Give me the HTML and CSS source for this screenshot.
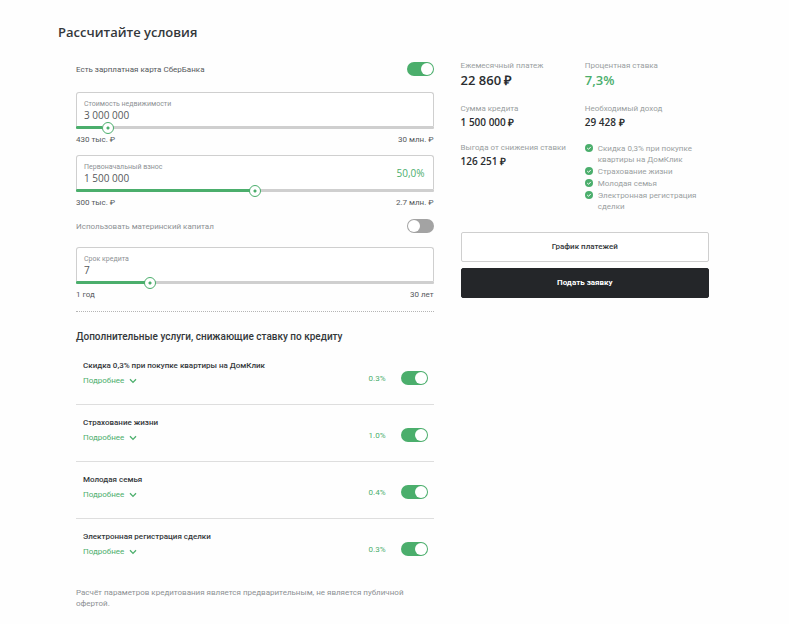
FILE: index.html
```html
<!DOCTYPE html>
<html lang="ru">
<head>
    <meta charset="UTF-8">
    <meta name="viewport" content="width=device-width, initial-scale=1">
    <title>Рассчитайте условия</title>
    <link rel="stylesheet" href="styles.css">
</head>
<body>

<div class="container">
    <h1>Рассчитайте условия</h1>

    <div class="columns">
        <form class="calc">
            <div class="option">
                <label for="salaryCard">Есть зарплатная карта СберБанка</label>
                <input class="switch" type="checkbox" id="salaryCard" checked>
            </div>

            <div class="field">
                <div class="field-box">
                    <div class="field-main">
                        <label for="price">Стоимость недвижимости</label>
                        <input type="text" id="price" value="3 000 000">
                    </div>
                </div>
                <input class="slider" type="range" aria-label="Стоимость недвижимости" min="0" max="100" step="0.1" value="7.4" style="--fill: 7.4%">
                <div class="limits"><span>430 тыс. ₽</span><span>30 млн. ₽</span></div>
            </div>

            <div class="field">
                <div class="field-box">
                    <div class="field-main">
                        <label for="deposit">Первоначальный взнос</label>
                        <input type="text" id="deposit" value="1 500 000">
                    </div>
                    <span class="share">50,0%</span>
                </div>
                <input class="slider" type="range" aria-label="Первоначальный взнос" min="0" max="100" step="0.1" value="50" style="--fill: 50%">
                <div class="limits"><span>300 тыс. ₽</span><span>2.7 млн. ₽</span></div>
            </div>

            <div class="option muted">
                <label for="capital">Использовать материнский капитал</label>
                <input class="switch" type="checkbox" id="capital">
            </div>

            <div class="field">
                <div class="field-box">
                    <div class="field-main">
                        <label for="term">Срок кредита</label>
                        <input type="text" id="term" value="7">
                    </div>
                </div>
                <input class="slider" type="range" aria-label="Срок кредита" min="0" max="100" step="0.1" value="19.7" style="--fill: 19.7%">
                <div class="limits"><span>1 год</span><span>30 лет</span></div>
            </div>

            <h2>Дополнительные услуги, снижающие ставку по кредиту</h2>

            <ul class="services">
                <li>
                    <div>
                        <label for="domclick">Скидка 0,3% при покупке квартиры на ДомКлик</label>
                        <button type="button" class="more">Подробнее <svg viewBox="0 0 8 6"><path d="M1 1.2l3 3.2 3-3.2"/></svg></button>
                    </div>
                    <div class="service-side">
                        <span>0.3%</span>
                        <input class="switch" type="checkbox" id="domclick" checked>
                    </div>
                </li>
                <li>
                    <div>
                        <label for="life">Страхование жизни</label>
                        <button type="button" class="more">Подробнее <svg viewBox="0 0 8 6"><path d="M1 1.2l3 3.2 3-3.2"/></svg></button>
                    </div>
                    <div class="service-side">
                        <span>1.0%</span>
                        <input class="switch" type="checkbox" id="life" checked>
                    </div>
                </li>
                <li>
                    <div>
                        <label for="family">Молодая семья</label>
                        <button type="button" class="more">Подробнее <svg viewBox="0 0 8 6"><path d="M1 1.2l3 3.2 3-3.2"/></svg></button>
                    </div>
                    <div class="service-side">
                        <span>0.4%</span>
                        <input class="switch" type="checkbox" id="family" checked>
                    </div>
                </li>
                <li>
                    <div>
                        <label for="registration">Электронная регистрация сделки</label>
                        <button type="button" class="more">Подробнее <svg viewBox="0 0 8 6"><path d="M1 1.2l3 3.2 3-3.2"/></svg></button>
                    </div>
                    <div class="service-side">
                        <span>0.3%</span>
                        <input class="switch" type="checkbox" id="registration" checked>
                    </div>
                </li>
            </ul>

            <p class="note">Расчёт параметров кредитования является предварительным, не является публичной офертой.</p>
        </form>

        <div class="summary">
            <div class="totals">
                <dl>
                    <dt>Ежемесячный платеж</dt>
                    <dd class="big">22 860 ₽</dd>
                    <dt>Сумма кредита</dt>
                    <dd>1 500 000 ₽</dd>
                    <dt>Выгода от снижения ставки</dt>
                    <dd>126 251 ₽</dd>
                </dl>
                <div>
                    <dl>
                        <dt>Процентная ставка</dt>
                        <dd class="big green">7,3%</dd>
                        <dt>Необходимый доход</dt>
                        <dd>29 428 ₽</dd>
                    </dl>
                    <ul class="benefits">
                        <li><svg viewBox="0 0 8 8"><circle cx="4" cy="4" r="4"/><path d="M2.2 4l1.3 1.3 2.3-2.4"/></svg>Скидка 0,3% при покупке квартиры на ДомКлик</li>
                        <li><svg viewBox="0 0 8 8"><circle cx="4" cy="4" r="4"/><path d="M2.2 4l1.3 1.3 2.3-2.4"/></svg>Страхование жизни</li>
                        <li><svg viewBox="0 0 8 8"><circle cx="4" cy="4" r="4"/><path d="M2.2 4l1.3 1.3 2.3-2.4"/></svg>Молодая семья</li>
                        <li><svg viewBox="0 0 8 8"><circle cx="4" cy="4" r="4"/><path d="M2.2 4l1.3 1.3 2.3-2.4"/></svg>Электронная регистрация сделки</li>
                    </ul>
                </div>
            </div>
            <button type="button" class="btn">График платежей</button>
            <button type="button" class="btn btn-dark">Подать заявку</button>
        </div>
    </div>
</div>

</body>
</html>
```
FILE: styles.css
```css
* {
    box-sizing: border-box;
}

body {
    font-family: Roboto, 'Open Sans', sans-serif;
    font-size: 8px;
    line-height: 11px;
    color: #55595c;
    background: #fefefe;
    margin: 0;
}

h1, h2, p, ul, dl, dd {
    margin: 0;
    padding: 0;
}

ul {
    list-style: none;
}

input, button {
    font-family: inherit;
    margin: 0;
}

.container {
    padding: 23px 80px 15px 58px;
}

h1 {
    font-family: 'Open Sans', sans-serif;
    font-size: 13px;
    line-height: 18px;
    font-weight: 600;
    color: #34383b;
    margin-bottom: 19px;
}

.columns {
    display: grid;
    grid-template-columns: 357fr 248fr;
    gap: 27px;
    align-items: start;
    padding-left: 18px;
}

.calc {
    padding-top: 2px;
}

.option {
    display: flex;
    justify-content: space-between;
    align-items: center;
}

.muted {
    color: #8d9194;
    margin-top: 11px;
}

/* toggle */
.switch {
    appearance: none;
    display: block;
    flex: none;
    width: 27px;
    height: 14px;
    border-radius: 7px;
    background: #a3a3a3;
    cursor: pointer;
}

.switch::before {
    content: "";
    display: block;
    width: 12px;
    height: 12px;
    margin: 1px;
    border-radius: 50%;
    background: #fff;
}

.switch:checked {
    background: #4bae6c;
}

.switch:checked::before {
    margin-left: 14px;
}

/* field with slider */
.option + .field {
    margin-top: 16px;
}

.muted + .field {
    margin-top: 14px;
}

.field + .field {
    margin-top: 10px;
}

.field-box {
    display: flex;
    align-items: center;
    padding: 6px 8px 5px 7px;
    border: 1px solid #cfcfcf;
    border-bottom: none;
    border-radius: 3px 3px 0 0;
    background: #fff;
}

.field-main {
    flex: 1;
}

.field-main label {
    display: block;
    font-size: 7px;
    line-height: 10px;
    color: #8d9194;
}

.field-main input {
    display: block;
    width: 100%;
    height: 12px;
    padding: 0;
    border: none;
    background: none;
    font-family: 'Open Sans', sans-serif;
    font-size: 10px;
    line-height: 12px;
    color: #55595c;
}

.share {
    font-family: 'Open Sans', sans-serif;
    font-size: 10px;
    color: #4bae6c;
}

.slider {
    appearance: none;
    display: block;
    width: 100%;
    height: 12px;
    margin-top: -5px;
    margin-bottom: 1px;
    background: none;
    cursor: pointer;
}

.slider::-webkit-slider-runnable-track {
    height: 3px;
    border-radius: 1px;
    background: linear-gradient(to right, #4bae6c var(--fill), #cfcfcf var(--fill));
}

.slider::-webkit-slider-thumb {
    appearance: none;
    width: 12px;
    height: 12px;
    margin-top: -4px;
    border: 1px solid #4bae6c;
    border-radius: 50%;
    background: radial-gradient(circle, #4bae6c 1px, #fff 2px);
}

.limits {
    display: flex;
    justify-content: space-between;
    line-height: 11px;
}

h2 {
    font-size: 10px;
    line-height: 17px;
    font-weight: 500;
    color: #34383b;
    margin-top: 11px;
    padding-top: 16px;
    border-top: 1px dotted #b5b5b5;
}

.services {
    margin-top: 3px;
}

.services li {
    display: flex;
    justify-content: space-between;
    align-items: flex-start;
    padding: 12px 6px 18px 7px;
    border-bottom: 1px solid #dedede;
}

.services li:last-child {
    border-bottom: none;
}

.services label {
    display: block;
    font-weight: 500;
    color: #34383b;
}

.more {
    display: flex;
    align-items: center;
    gap: 5px;
    margin-top: 4px;
    padding: 0;
    border: none;
    background: none;
    font-size: 8px;
    line-height: 11px;
    color: #4bae6c;
    cursor: pointer;
}

.more svg {
    width: 8px;
    height: 6px;
    fill: none;
    stroke: #4bae6c;
    stroke-width: 1.3;
}

.service-side {
    display: flex;
    align-items: center;
    gap: 15px;
    margin-top: 11px;
    color: #4bae6c;
}

.note {
    margin-top: 12px;
    padding-right: 24px;
    color: #8d9194;
}

/* right column */
.summary {
    padding-top: 1px;
}

.totals {
    display: grid;
    grid-template-columns: 1fr 1fr;
    margin-bottom: 19px;
}

dt {
    line-height: 10px;
    color: #9a9ea1;
    white-space: nowrap;
}

dd {
    font-family: 'Open Sans', sans-serif;
    font-size: 10px;
    line-height: 16px;
    font-weight: 600;
    color: #2a2d30;
    margin-bottom: 13px;
}

.big {
    font-size: 13px;
    line-height: 18px;
    margin-bottom: 15px;
}

.green {
    color: #4bae6c;
}

.benefits li {
    display: flex;
    align-items: flex-start;
    gap: 5px;
    margin-bottom: 1px;
    color: #9a9ea1;
}

.benefits svg {
    flex: none;
    width: 8px;
    height: 8px;
    margin-top: 1px;
    fill: #4bae6c;
}

.benefits path {
    fill: none;
    stroke: #fff;
}

.btn {
    display: block;
    width: 100%;
    padding: 8px;
    border: 1px solid #cfcfcf;
    border-radius: 2px;
    background: #fff;
    font-size: 8px;
    line-height: 12px;
    font-weight: 500;
    color: #34383b;
    cursor: pointer;
}

.btn-dark {
    margin-top: 6px;
    border-color: #242629;
    background: #242629;
    font-weight: 700;
    color: #fff;
}
```
